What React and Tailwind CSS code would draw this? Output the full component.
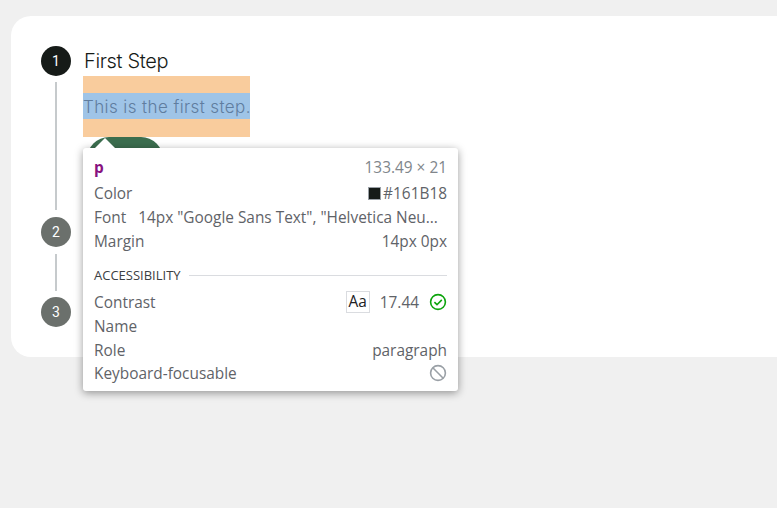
const segoe = { fontFamily: '"Open Sans", "Noto Sans", sans-serif' };

function Row({ label, children, className = "" }) {
  return (
    <div className={`flex items-center justify-between h-[24px] ${className}`}>
      <span className="text-[#5f6368]">{label}</span>
      {children}
    </div>
  );
}

function Circle({ n, dark }) {
  return (
    <div className={`w-[30px] h-[30px] shrink-0 rounded-full flex items-center justify-center text-[14px] text-white ${dark ? "bg-[#161b18]" : "bg-[#6b706c]"}`}>
      {n}
    </div>
  );
}

export default function App() {
  return (
    <div className="relative w-[777px] h-[508px] overflow-hidden bg-[#f0f0f0] pt-[16px] pl-[11px] font-['Roboto',sans-serif]">
      <div className="w-[800px] h-[341px] bg-white rounded-[20px] pt-[30px] pl-[30px]">
        <div className="flex gap-[12px]">
          <div className="flex flex-col items-center w-[30px]">
            <Circle n="1" dark />
            <div className="w-[2px] h-[128px] mt-[6px] bg-[#c6cacc]" />
            <div className="mt-[7px]"><Circle n="2" /></div>
            <div className="w-[2px] h-[37px] mt-[7px] bg-[#c6cacc]" />
            <div className="mt-[6px]"><Circle n="3" /></div>
          </div>
          <div className="w-[167px]">
            <div className="h-[30px] flex items-center text-[20px] text-[#161b18] font-['Inter',sans-serif] font-light tracking-[-0.35px] pl-px">First Step</div>
            <div className="h-[61px] bg-[#f9cc9d] pt-[17px]">
              <div className="w-full h-[26px] bg-[#9fc4e7] flex items-center pt-[3px] text-[17px] text-[#5f7d9f] font-['Inter',sans-serif] font-light whitespace-nowrap tracking-[0.4px]">This is the first step.</div>
            </div>
            <div className="ml-[4px] w-[76px] h-[40px] rounded-t-[22px] bg-[#3c6e4f]" />
          </div>
        </div>
      </div>

      <div className="absolute left-[83px] top-[148px] w-[375px] h-[243px] bg-white rounded-[3px] shadow-[0_2px_8px_rgba(0,0,0,0.4)] px-[11px] pt-[8px] text-[15.4px] leading-[24px]" style={segoe}>
        <div className="absolute left-[12px] -top-[10px] w-0 h-0 border-l-[10px] border-r-[10px] border-b-[10px] border-l-transparent border-r-transparent border-b-white" />
        <div className="flex items-center justify-between h-[26px] pb-[3px]">
          <span className="text-[#881280] font-bold">p</span>
          <span className="text-[#80868b]">133.49 × 21</span>
        </div>
        <Row label="Color">
          <span className="flex items-center text-[#5f6368]">
            <span className="w-[13px] h-[13px] mr-[2px] mb-[2px] bg-[#161b18] border border-[#9aa0a6]" />#161B18
          </span>
        </Row>
        <div className="flex items-center h-[24px] text-[#5f6368] whitespace-nowrap">
          <span>Font</span>
          <span className="ml-[12px]">14px "Google Sans Text", "Helvetica Neu...</span>
        </div>
        <Row label="Margin"><span className="text-[#5f6368]">14px 0px</span></Row>
        <div className="flex items-center h-[24px] mt-[9px] gap-[8px]">
          <span className="text-[13px] text-[#3c4043]">ACCESSIBILITY</span>
          <div className="flex-1 h-px bg-[#dadce0]" />
        </div>
        <div className="flex items-center justify-between h-[24px] mt-[4px]">
          <span className="text-[#5f6368]">Contrast</span>
          <span className="flex items-center text-[#5f6368]">
            <span className="w-[24px] h-[22px] mb-[2px] border border-[#dadce0] flex items-center justify-center text-[#202124]">Aa</span>
            <span className="ml-[10px] mr-[10px]">17.44</span>
            <svg className="mb-[2px]" width="18" height="18" viewBox="0 0 18 18" fill="none" stroke="#0ca40c" strokeWidth="1.6">
              <circle cx="9" cy="9" r="7.4" />
              <path d="M5.4 9.2l2.6 2.5 4.8-4.8" />
            </svg>
          </span>
        </div>
        <Row label="Name" />
        <Row label="Role"><span className="text-[#5f6368]">paragraph</span></Row>
        <Row label="Keyboard-focusable" className="-mt-px">
          <svg className="mb-[2px]" width="18" height="18" viewBox="0 0 18 18" fill="none" stroke="#9aa0a6" strokeWidth="1.6">
            <circle cx="9" cy="9" r="7.4" />
            <path d="M3.8 3.8l10.4 10.4" />
          </svg>
        </Row>
      </div>
    </div>
  );
}
